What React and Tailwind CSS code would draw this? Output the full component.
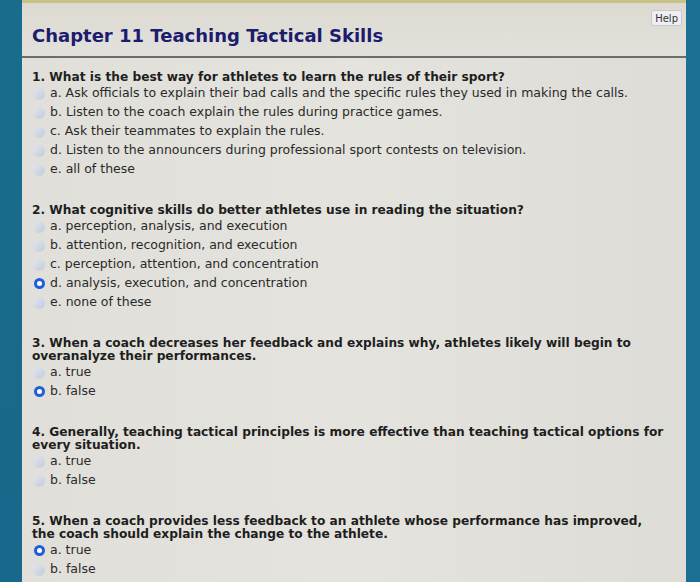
import React from "react";

const questions = [
  {
    lines: ["1. What is the best way for athletes to learn the rules of their sport?"],
    options: [
      "a. Ask officials to explain their bad calls and the specific rules they used in making the calls.",
      "b. Listen to the coach explain the rules during practice games.",
      "c. Ask their teammates to explain the rules.",
      "d. Listen to the announcers during professional sport contests on television.",
      "e. all of these",
    ],
    selected: -1,
  },
  {
    lines: ["2. What cognitive skills do better athletes use in reading the situation?"],
    options: [
      "a. perception, analysis, and execution",
      "b. attention, recognition, and execution",
      "c. perception, attention, and concentration",
      "d. analysis, execution, and concentration",
      "e. none of these",
    ],
    selected: 3,
  },
  {
    lines: [
      "3. When a coach decreases her feedback and explains why, athletes likely will begin to",
      "overanalyze their performances.",
    ],
    options: ["a. true", "b. false"],
    selected: 1,
  },
  {
    lines: [
      "4. Generally, teaching tactical principles is more effective than teaching tactical options for",
      "every situation.",
    ],
    options: ["a. true", "b. false"],
    selected: -1,
  },
  {
    lines: [
      "5. When a coach provides less feedback to an athlete whose performance has improved,",
      "the coach should explain the change to the athlete.",
    ],
    options: ["a. true", "b. false"],
    selected: 0,
  },
];

function Radio({ on }) {
  return (
    <span className="w-[12px] h-[12px] flex items-center justify-center shrink-0">
      {on ? (
        <span className="w-[11px] h-[11px] rounded-full bg-[#1f5fd8] flex items-center justify-center">
          <span className="w-[5px] h-[5px] rounded-full bg-white" />
        </span>
      ) : (
        <span className="w-[12px] h-[12px] rounded-full bg-gradient-to-br from-[#e2e6ee] to-[#c3cadb]" />
      )}
    </span>
  );
}

export default function App() {
  return (
    <div
      className="w-[700px] h-[582px] flex overflow-hidden bg-[#1b6e8e] text-[#222]"
      style={{ fontFamily: '"DejaVu Sans", Verdana, sans-serif' }}
    >
      <div className="w-[22px] shrink-0 bg-gradient-to-b from-[#1a6c8c] to-[#17688a]" />
      <div className="flex-1 flex flex-col bg-gradient-to-r from-[#e0dfd9] via-[#e4e3de] to-[#dedcd6]">
        <div className="h-[3px] bg-[#c9c287]" />
        <div className="h-[55px] flex justify-between pl-[10px] pr-[4px] border-b-2 border-[#6d6d6d] bg-gradient-to-b from-[#dcdad0] to-[#e2e1dc]">
          <h1 className="text-[18px] leading-[22px] font-bold text-[#1c1c6e] mt-[22px]">Chapter 11 Teaching Tactical Skills</h1>
          <span className="self-start mt-[7px] px-[3px] h-[16px] flex items-center text-[10px] text-[#333] bg-[#efeff3] border border-[#c8c8d0] rounded-[2px]">
            Help
          </span>
        </div>
        <div className="pl-[10px] pt-[13px] flex flex-col gap-[25px]">
          {questions.map((q, i) => (
            <div key={i} className="flex flex-col">
              <div className="text-[12.2px] leading-[13px] font-bold text-[#1e1e1e]">
                {q.lines.map((l, j) => (
                  <div key={j} className="whitespace-nowrap">{l}</div>
                ))}
              </div>
              {q.options.map((o, j) => (
                <div key={j} className="h-[19px] flex items-center pl-[1px] gap-[5px]">
                  <Radio on={q.selected === j} />
                  <span className="text-[12.5px] whitespace-nowrap text-[#2a2a2a]">{o}</span>
                </div>
              ))}
            </div>
          ))}
        </div>
      </div>
      <div className="w-[14px] shrink-0 bg-[#1b6f93]" />
    </div>
  );
}
